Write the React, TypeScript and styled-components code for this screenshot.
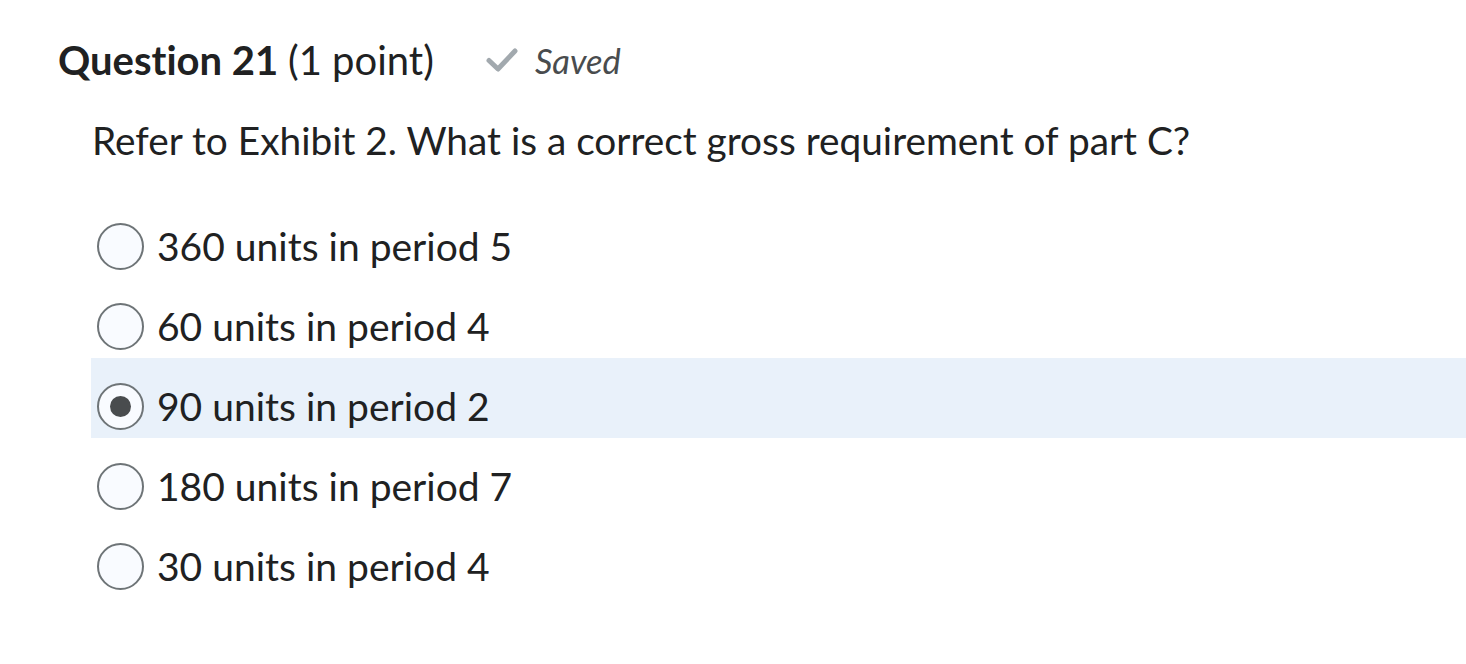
import React from "react";
import styled, { createGlobalStyle } from "styled-components";

const Global = createGlobalStyle`
  body {
    margin: 0;
    background: #ffffff;
    font-family: Lato, "Open Sans", sans-serif;
    font-variant-ligatures: none;
    color: #202122;
  }
`;

const Page = styled.div`
  padding: 33px 0 0 0;
`;

const Header = styled.div`
  display: flex;
  align-items: center;
  padding-left: 58px;
  height: 54px;
`;

const Title = styled.h2`
  margin: 0;
  font-size: 40px;
  font-weight: 700;
  color: #202122;
  span {
    font-weight: 400;
  }
`;

const Status = styled.div`
  display: flex;
  align-items: center;
  gap: 17px;
  margin-left: 52px;
  font-size: 34.5px;
  font-style: italic;
  color: #494c4e;
`;

const Prompt = styled.p`
  margin: 26px 0 0 92px;
  font-size: 38.8px;
  line-height: 54px;
`;

const Options = styled.div`
  margin: 31px 0 0 91px;
  display: flex;
  flex-direction: column;
`;

const Row = styled.label<{ $selected?: boolean }>`
  box-sizing: border-box;
  display: flex;
  align-items: center;
  gap: 13px;
  height: 80px;
  padding: 16px 0 0 6px;
  font-size: 39px;
  background: ${(p) => (p.$selected ? "#e9f1fa" : "transparent")};
`;

const Radio = styled.span<{ $checked?: boolean }>`
  box-sizing: border-box;
  width: 47px;
  height: 47px;
  border-radius: 50%;
  border: 2px solid #6e7477;
  background: #f9fbff;
  display: flex;
  align-items: center;
  justify-content: center;
  &::after {
    content: "";
    display: ${(p) => (p.$checked ? "block" : "none")};
    width: 21px;
    height: 21px;
    border-radius: 50%;
    background: #494c4e;
  }
`;

const CheckIcon = () => (
  <svg width="32" height="26" viewBox="0 0 32 26">
    <path
      d="M3 13.5 L12 22 L29 4"
      fill="none"
      stroke="#a2a9ae"
      strokeWidth="5"
      strokeLinecap="round"
      strokeLinejoin="round"
    />
  </svg>
);

const answers = [
  "360 units in period 5",
  "60 units in period 4",
  "90 units in period 2",
  "180 units in period 7",
  "30 units in period 4",
];

export default function App() {
  const selected = 2;
  return (
    <Page>
      <Global />
      <Header>
        <Title>
          Question 21 <span>(1 point)</span>
        </Title>
        <Status>
          <CheckIcon />
          Saved
        </Status>
      </Header>
      <Prompt>Refer to Exhibit 2. What is a correct gross requirement of part C?</Prompt>
      <Options>
        {answers.map((a, i) => (
          <Row key={a} $selected={i === selected}>
            <Radio $checked={i === selected} />
            {a}
          </Row>
        ))}
      </Options>
    </Page>
  );
}
